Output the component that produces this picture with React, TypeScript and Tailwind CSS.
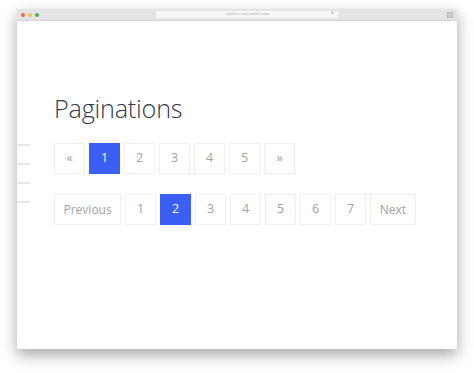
const row1 = ["«", "1", "2", "3", "4", "5", "»"];
const row2 = ["Previous", "1", "2", "3", "4", "5", "6", "7", "Next"];

const PageBtn = ({ label, active }: { label: string; active?: boolean }) => (
  <div
    className={
      "h-[31px] min-w-[31px] flex items-center justify-center border " +
      (label.length > 1 ? "px-[8.5px] text-[12px] " : "text-[12.5px] ") +
      (active
        ? "bg-[#3b5ef5] border-[#3b5ef5] text-white"
        : "bg-white border-[#efefef] text-[#a2a2a2]")
    }
  >
    {label}
  </div>
);

export default function App() {
  return (
    <div
      className="w-[474px] h-[373px] bg-white relative overflow-hidden"
      style={{ fontFamily: "'Open Sans', sans-serif" }}
    >
      <div className="absolute left-[17px] top-[9px] w-[440px] h-[340px] bg-white flex flex-col shadow-[0_6px_14px_rgba(0,0,0,0.35)]">
        {/* title bar */}
        <div className="h-[12px] bg-[#e4e4e4] border-b border-[#d2d2d2] flex items-center px-[4px] relative">
          <div className="flex gap-[3px]">
            <span className="w-[4px] h-[4px] rounded-full bg-[#f0635a]" />
            <span className="w-[4px] h-[4px] rounded-full bg-[#f6be4f]" />
            <span className="w-[4px] h-[4px] rounded-full bg-[#4bb34b]" />
          </div>
          <div className="ml-[117px] w-[182px] h-[7px] bg-[#f7f7f7] rounded-[1px] flex items-center justify-center relative">
            <span className="text-[3px] text-[#999] leading-none">⌕ Search or enter website name</span>
            <span className="absolute right-[4px] top-0 text-[4px] text-[#888] leading-none">↻</span>
          </div>
          <div className="ml-auto w-[6px] h-[6px] bg-[#cfcfcf] border border-[#bbb]" />
        </div>
        {/* content */}
        <div className="flex-1 relative pl-[37px] pt-[70px]">
          <div className="absolute left-0 top-[123px] flex flex-col gap-[17px]">
            {[0, 1, 2, 3].map((i) => (
              <span key={i} className="w-[13px] h-[2px] bg-[#e6e6e6]" />
            ))}
          </div>
          <h1 className="text-[25.2px] font-light text-[#2e3a4c] leading-[34px] tracking-[-0.2px]">
            Paginations
          </h1>
          <div className="mt-[18px] flex gap-[4px]">
            {row1.map((l, i) => (
              <PageBtn key={i} label={l} active={i === 1} />
            ))}
          </div>
          <div className="mt-[20px] flex gap-[4px]">
            {row2.map((l, i) => (
              <PageBtn key={i} label={l} active={i === 2} />
            ))}
          </div>
        </div>
      </div>
    </div>
  );
}
